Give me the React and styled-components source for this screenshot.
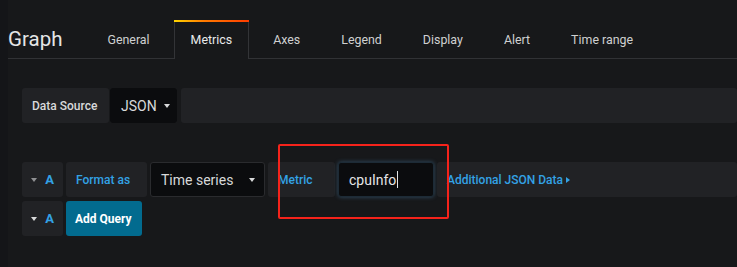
import React from 'react';
import styled, { createGlobalStyle } from 'styled-components';

const GlobalStyle = createGlobalStyle`
  html, body {
    margin: 0;
    background: #141518;
    font-family: Roboto, "Liberation Sans", sans-serif;
    color: #d8d9da;
  }
`;

const Page = styled.div`
  padding-left: 8px;
  height: 267px;
  overflow: hidden;
`;

const Panel = styled.div`
  background: #17181a;
  height: 100%;
`;

const Header = styled.div`
  display: flex;
  align-items: flex-end;
  height: 58px;
  border-bottom: 1px solid #313235;
`;

const Title = styled.h1`
  margin: 0 28px 0 0;
  height: 38px;
  line-height: 38px;
  font-size: 20.5px;
  font-weight: 400;
  color: #e4e5e6;
`;

const Tab = styled.div`
  box-sizing: border-box;
  height: ${(p) => (p.$active ? '39px' : '38px')};
  margin-right: 7px;
  margin-bottom: ${(p) => (p.$active ? '-1px' : '0')};
  padding: 0 16px;
  display: flex;
  align-items: center;
  white-space: nowrap;
  font-size: 12.4px;
  color: ${(p) => (p.$active ? '#e9eaeb' : '#cfd0d1')};
  background: ${(p) => (p.$active ? '#17181a' : 'transparent')};
  border-left: 1px solid ${(p) => (p.$active ? '#333437' : 'transparent')};
  border-right: 1px solid ${(p) => (p.$active ? '#333437' : 'transparent')};
  position: relative;

  ${(p) =>
    p.$active &&
    `
    &::before {
      content: '';
      position: absolute;
      left: -1px;
      right: -1px;
      top: 0;
      height: 2px;
      background: linear-gradient(to right, #ffd500, #ff7a00 40%, #ff3d00);
    }
  `}
`;

const Body = styled.div`
  padding: 29px 0 0 14px;
  display: flex;
  flex-direction: column;
`;

const Row = styled.div`
  display: flex;
  height: 35px;
  gap: ${(p) => p.$gap || 0}px;
`;

const Group = styled.div`
  display: flex;
  gap: ${(p) => p.$gap || 0}px;
`;

const Label = styled.div`
  box-sizing: border-box;
  width: ${(p) => (p.$w ? `${p.$w}px` : 'auto')};
  flex: ${(p) => (p.$grow ? 1 : 'none')};
  padding: 0 10px;
  display: flex;
  align-items: center;
  white-space: nowrap;
  background: #212225;
  border-radius: 3px;
  font-size: 12px;
  font-weight: 500;
  color: ${(p) => (p.$blue ? '#33a2e5' : '#d8d9da')};
`;

const Select = styled.div`
  box-sizing: border-box;
  width: ${(p) => p.$w}px;
  padding: 0 9px 0 10px;
  display: flex;
  align-items: center;
  justify-content: ${(p) => (p.$spread ? 'space-between' : 'flex-start')};
  gap: 7px;
  white-space: nowrap;
  background: #0b0c0e;
  border: 1px solid ${(p) => (p.$bordered ? '#2a2b2e' : '#0b0c0e')};
  border-radius: 3px;
  font-size: 14px;
  color: #d8d9da;
`;

const Caret = styled.span`
  width: 0;
  height: 0;
  border-left: 3.5px solid transparent;
  border-right: 3.5px solid transparent;
  border-top: 4px solid ${(p) => p.$color || '#d8d9da'};
`;

const RightCaret = styled.span`
  display: inline-block;
  width: 0;
  height: 0;
  margin-left: 3px;
  border-top: 3.5px solid transparent;
  border-bottom: 3.5px solid transparent;
  border-left: 4px solid #33a2e5;
`;

const Collapse = styled.div`
  box-sizing: border-box;
  width: 41px;
  display: flex;
  align-items: center;
  justify-content: center;
  gap: 8px;
  background: #212225;
  border-radius: 3px;
`;

const Letter = styled.span`
  font-size: 13px;
  font-weight: 700;
  color: #33a2e5;
`;

const Input = styled.div`
  box-sizing: border-box;
  width: 96px;
  padding: 0 10px;
  display: flex;
  align-items: center;
  background: #0b0c0e;
  border: 1px solid #1d2b36;
  border-radius: 3px;
  box-shadow: 0 0 4px rgba(82, 145, 190, 0.45);
  font-size: 14px;
  color: #e4e5e6;
`;

const Cursor = styled.span`
  display: inline-block;
  width: 1px;
  height: 17px;
  margin-left: 1px;
  background: #e4e5e6;
`;

const AddButton = styled.div`
  box-sizing: border-box;
  width: 76px;
  padding: 0 9px;
  display: flex;
  align-items: center;
  white-space: nowrap;
  background: #026b8f;
  border-radius: 3px;
  font-size: 12px;
  font-weight: 700;
  color: #ffffff;
`;

const QueryArea = styled.div`
  position: relative;
  margin-top: 39px;
  display: flex;
  flex-direction: column;
  gap: 4px;
`;

const Highlight = styled.div`
  position: absolute;
  left: 256px;
  top: -18px;
  width: 171px;
  height: 75px;
  box-sizing: border-box;
  border: 2px solid #f5231b;
  border-radius: 2px;
  pointer-events: none;
`;

const tabs = ['General', 'Metrics', 'Axes', 'Legend', 'Display', 'Alert', 'Time range'];

export default function App() {
  return (
    <Page>
      <GlobalStyle />
      <Panel>
        <Header>
          <Title>Graph</Title>
          {tabs.map((t) => (
            <Tab key={t} $active={t === 'Metrics'}>
              {t}
            </Tab>
          ))}
        </Header>
        <Body>
          <Row $gap={4}>
            <Group $gap={1}>
              <Label $w={87}>Data Source</Label>
              <Select $w={67}>
                JSON
                <Caret />
              </Select>
            </Group>
            <Label $grow />
          </Row>
          <QueryArea>
            <Row $gap={3}>
              <Collapse>
                <Caret $color="#8f9092" />
                <Letter>A</Letter>
              </Collapse>
              <Label $w={81} $blue>Format as</Label>
              <Select $w={115} $bordered $spread>
                Time series
                <Caret />
              </Select>
              <Label $w={67} $blue>Metric</Label>
              <Input>
                cpuInfo
                <Cursor />
              </Input>
              <Label $grow $blue>
                Additional JSON Data
                <RightCaret />
              </Label>
            </Row>
            <Row $gap={3}>
              <Collapse>
                <Caret $color="#d8d9da" />
                <Letter>A</Letter>
              </Collapse>
              <AddButton>Add Query</AddButton>
            </Row>
            <Highlight />
          </QueryArea>
        </Body>
      </Panel>
    </Page>
  );
}
